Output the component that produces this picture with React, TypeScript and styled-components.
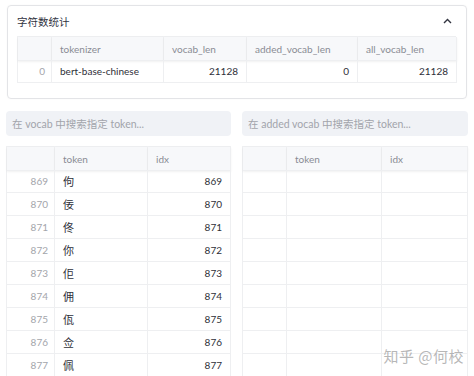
import styled, { createGlobalStyle } from 'styled-components'

const GlobalStyle = createGlobalStyle`
  html, body {
    margin: 0;
    padding: 0;
    background: #ffffff;
    overflow: hidden;
  }
  body {
    font-family: Lato, "Noto Sans CJK SC", sans-serif;
    color: #31333f;
  }
`

const statsColumns = [34, 112, 83, 111, 99]
const vocabColumns = [48, 93, 83]
const addedColumns = [44, 95, 86]

const vocabRows: [number, string][] = [
  [869, '佝'],
  [870, '佞'],
  [871, '佟'],
  [872, '你'],
  [873, '佢'],
  [874, '佣'],
  [875, '佤'],
  [876, '佥'],
  [877, '佩'],
]

export default function App() {
  return (
    <Page>
      <GlobalStyle />
      <Expander>
        <ExpanderHead>
          <Title>字符数统计</Title>
          <svg width="9" height="6" viewBox="0 0 9 6">
            <path d="M1 5 L4.5 1.5 L8 5" fill="none" stroke="#31333f" strokeWidth="1.4" />
          </svg>
        </ExpanderHead>
        <Table $cols={statsColumns}>
          <HeadCell />
          <HeadCell>tokenizer</HeadCell>
          <HeadCell>vocab_len</HeadCell>
          <HeadCell>added_vocab_len</HeadCell>
          <HeadCell>all_vocab_len</HeadCell>
          <IndexCell>0</IndexCell>
          <Cell>bert-base-chinese</Cell>
          <Cell $num>21128</Cell>
          <Cell $num>0</Cell>
          <Cell $num>21128</Cell>
        </Table>
      </Expander>

      <Columns>
        <Column>
          <SearchInput placeholder="在 vocab 中搜索指定 token..." />
          <Table $cols={vocabColumns}>
            <HeadCell />
            <HeadCell>token</HeadCell>
            <HeadCell>idx</HeadCell>
            {vocabRows.map(([i, t]) => (
              <Row key={i}>
                <IndexCell>{i}</IndexCell>
                <Cell $cjk>{t}</Cell>
                <Cell $num>{i}</Cell>
              </Row>
            ))}
          </Table>
        </Column>
        <Column>
          <SearchInput placeholder="在 added vocab 中搜索指定 token..." />
          <Table $cols={addedColumns}>
            <HeadCell />
            <HeadCell>token</HeadCell>
            <HeadCell>idx</HeadCell>
            {Array.from({ length: 10 }).map((_, i) => (
              <Row key={i}>
                <IndexCell />
                <Cell />
                <Cell />
              </Row>
            ))}
          </Table>
        </Column>
      </Columns>

      <Watermark>知乎 @何校</Watermark>
    </Page>
  )
}

const Page = styled.div`
  position: relative;
  height: 376px;
  overflow: hidden;
  padding: 5px 7px 0;
  box-sizing: border-box;
`

const Expander = styled.div`
  border: 1px solid #e3e4e7;
  border-radius: 4px;
  padding: 0 10px 15px 9px;
  box-shadow: 0 0 2px rgba(0, 0, 0, 0.04);
`

const ExpanderHead = styled.div`
  height: 30px;
  display: flex;
  align-items: center;
  justify-content: space-between;
  padding-right: 4px;
`

const Title = styled.div`
  font-family: "Noto Sans CJK SC", sans-serif;
  font-size: 10.5px;
  color: #31333f;
`

const Table = styled.div<{ $cols: number[] }>`
  display: grid;
  grid-template-columns: ${p => p.$cols.map(c => `${c}px`).join(' ')};
  grid-auto-rows: 23px;
  border: 1px solid #eeeff1;
  border-right: none;
  border-bottom: none;
  font-size: 10px;
`

const Row = styled.div`
  display: contents;
`

const Cell = styled.div<{ $num?: boolean; $cjk?: boolean }>`
  display: flex;
  align-items: center;
  justify-content: ${p => (p.$num ? 'flex-end' : 'flex-start')};
  padding: 0 8px;
  border-right: 1px solid #eeeff1;
  border-bottom: 1px solid #eeeff1;
  color: #2e2f38;
  font-size: ${p => (p.$cjk ? '11px' : '10px')};
  white-space: nowrap;
  overflow: hidden;
`

const HeadCell = styled(Cell)`
  background: #f7f8fa;
  color: #8a8c94;
  height: 24px;
  box-sizing: border-box;
  box-shadow: 0 1px 2px rgba(0, 0, 0, 0.06);
`

const IndexCell = styled(Cell)`
  justify-content: flex-end;
  color: #a3a5ab;
  padding-right: 6px;
`

const Columns = styled.div`
  display: grid;
  grid-template-columns: 225px 226px;
  gap: 11px;
  margin: 12px -1px 0;
`

const Column = styled.div`
  display: flex;
  flex-direction: column;
  gap: 10px;
`

const SearchInput = styled.input`
  height: 25px;
  box-sizing: border-box;
  border: none;
  outline: none;
  border-radius: 4px;
  background: #f0f2f6;
  padding: 0 6px;
  font-family: Lato, "Noto Sans CJK SC", sans-serif;
  font-size: 10.5px;
  color: #31333f;
  &::placeholder {
    color: #a2a4ab;
  }
`

const Watermark = styled.div`
  position: absolute;
  right: 10px;
  bottom: 10px;
  font-family: "Noto Sans CJK SC", sans-serif;
  font-size: 15px;
  color: rgba(160, 160, 160, 0.75);
  letter-spacing: 0.5px;
`
